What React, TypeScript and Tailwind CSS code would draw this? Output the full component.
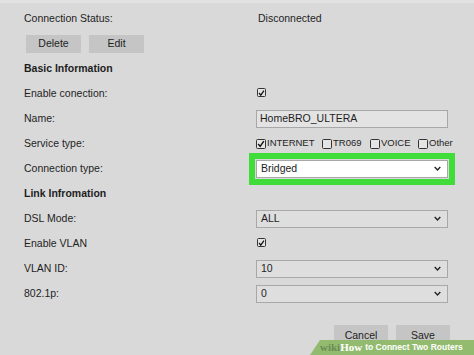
import React from "react";

function Check({ checked = true, size = "h-[9px] w-[9px]" }: { checked?: boolean; size?: string }) {
  return (
    <span className={"inline-flex shrink-0 items-center justify-center rounded-[1.5px] border border-[#333] bg-[#e4e4e4] " + size}>
      {checked && (
        <svg viewBox="0 0 10 10" className="h-[8px] w-[8px]">
          <polyline points="1.5,5 4,8 8.5,1.5" fill="none" stroke="#111" strokeWidth="1.8" />
        </svg>
      )}
    </span>
  );
}

function Chevron() {
  return (
    <svg viewBox="0 0 10 6" className="h-[5px] w-[7px]">
      <polyline points="1,1 5,5 9,1" fill="none" stroke="#222" strokeWidth="2" />
    </svg>
  );
}

function Select({ value, white = false, highlight = false }: { value: string; white?: boolean; highlight?: boolean }) {
  return (
    <div
      className={
        "flex h-[18px] w-[192px] items-center justify-between border border-[#a8a8a8] pl-[4px] pr-[6px] " +
        (white ? "bg-white " : "bg-[#dedede] ") +
        (highlight ? "outline-[6px] outline-offset-[1px] outline-solid outline-[#3fdc3a]" : "")
      }
    >
      <span>{value}</span>
      <Chevron />
    </div>
  );
}

function Row({ label, bold = false, children }: { label?: string; bold?: boolean; children?: React.ReactNode }) {
  return (
    <div className="flex h-[25px] items-center">
      <div className={"w-[256px] pl-[24px] " + (bold ? "font-bold" : "")}>{label}</div>
      <div className="flex items-center">{children}</div>
    </div>
  );
}

const services = [
  { name: "INTERNET", on: true, w: "w-[66px]" },
  { name: "TR069", on: false, w: "w-[48px]" },
  { name: "VOICE", on: false, w: "w-[48px]" },
  { name: "Other", on: false, w: "w-[36px]" },
];

export default function App() {
  return (
    <div
      className="relative h-[355px] w-[474px] overflow-hidden border-t-[3px] border-[#e2e2e2] bg-[#d9d9d9] text-[10.5px] text-[#1e1e1e]"
      style={{ fontFamily: '"Liberation Sans", Arial, sans-serif' }}
    >
      <div className="pt-[3px]">
        <Row label="Connection Status:">
          <span className="pl-[2px]">Disconnected</span>
        </Row>
        <div className="flex h-[25px] items-center gap-[8px] pl-[26px]">
          <button className="h-[18px] w-[55px] bg-[#c5c5c5]">Delete</button>
          <button className="h-[18px] w-[55px] bg-[#c5c5c5]">Edit</button>
        </div>
        <Row label="Basic Information" bold />
        <Row label="Enable conection:">
          <span className="pl-[1px]">
            <Check />
          </span>
        </Row>
        <Row label="Name:">
          <div className="flex h-[18px] w-[192px] items-center border border-[#a8a8a8] bg-[#e3e3e3] pl-[3px]">
            HomeBRO_ULTERA
          </div>
        </Row>
        <Row label="Service type:">
          <div className="flex items-center text-[9.5px]">
            {services.map((s) => (
              <div key={s.name} className={"flex items-center gap-[1px] " + s.w}>
                <Check checked={s.on} size="h-[10px] w-[10px]" />
                <span>{s.name}</span>
              </div>
            ))}
          </div>
        </Row>
        <Row label="Connection type:">
          <Select value="Bridged" white highlight />
        </Row>
        <Row label="Link Infromation" bold />
        <Row label="DSL Mode:">
          <Select value="ALL" />
        </Row>
        <Row label="Enable VLAN">
          <span className="pl-[1px]">
            <Check />
          </span>
        </Row>
        <Row label="VLAN ID:">
          <Select value="10" />
        </Row>
        <Row label="802.1p:">
          <Select value="0" />
        </Row>
        <div className="mt-[19px] flex justify-end gap-[8px] pr-[24px]">
          <button className="h-[21px] w-[54px] bg-[#c5c5c5]">Cancel</button>
          <button className="h-[21px] w-[54px] bg-[#c5c5c5]">Save</button>
        </div>
      </div>

      <div className="absolute bottom-0 right-0 flex h-[15px] w-[164px] items-center whitespace-nowrap bg-[#93bb6f] pl-[10px] text-[8.5px] font-bold text-white [clip-path:polygon(10px_0,100%_0,100%_100%,0_100%)]">
        <span className="text-[11px] text-[#6b8a55]" style={{ fontFamily: '"Liberation Serif", serif' }}>wiki</span>
        <span className="text-[11px]" style={{ fontFamily: '"Liberation Serif", serif' }}>How</span>
        <span className="pl-[3px]">to Connect Two Routers</span>
      </div>
    </div>
  );
}
